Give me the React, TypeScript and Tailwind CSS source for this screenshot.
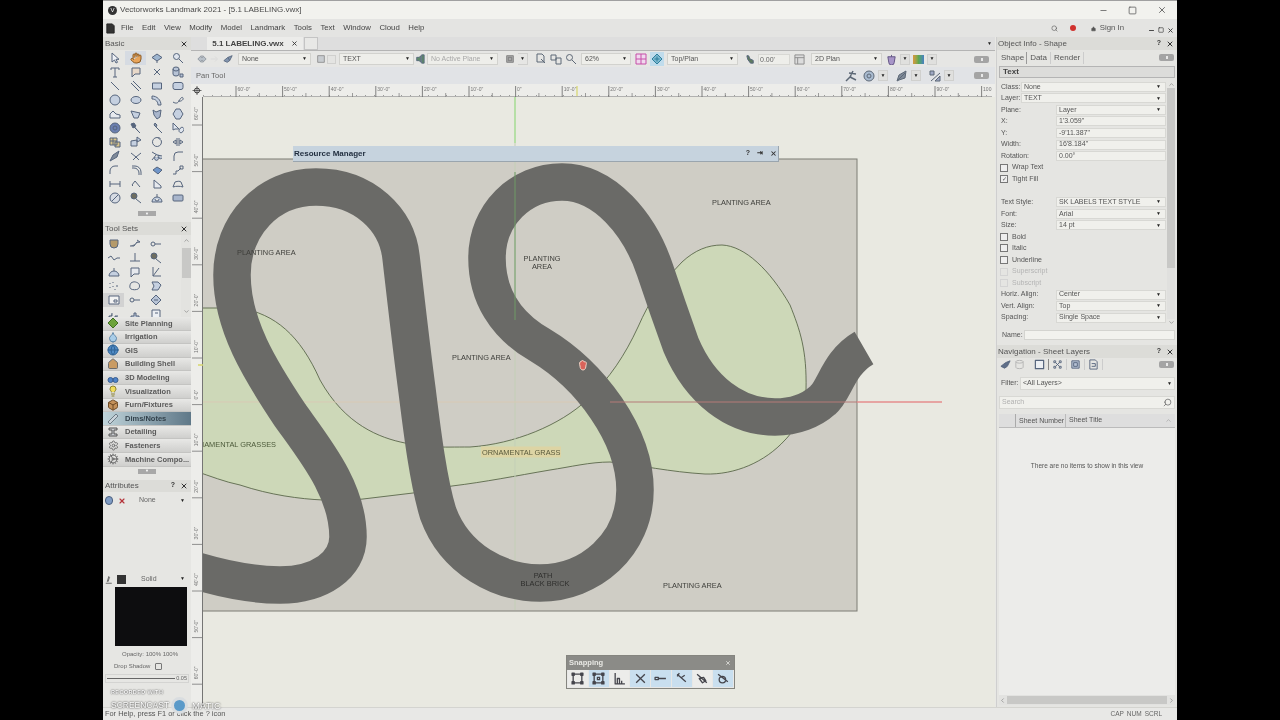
import React from 'react';
import { Hand, Minus, Square, X, Search, ChevronUp, ChevronDown, Lightbulb, Droplet, Globe, Settings, Cog, Box, Home } from 'lucide-react';

const menus = ['File', 'Edit', 'View', 'Modify', 'Model', 'Landmark', 'Tools', 'Text', 'Window', 'Cloud', 'Help'];

// small tool glyphs on a 12x12 grid: [path, fill]
const P = ({ d, fill = 'none', stroke = '#56657d', size = 12, sw = 1 }: { d: string; fill?: string; stroke?: string; size?: number; sw?: number }) => (
  <svg viewBox="0 0 12 12" width={size} height={size} className="shrink-0">
    <path d={d} fill={fill} stroke={stroke} strokeWidth={sw} strokeLinejoin="round" />
  </svg>
);

const basicTools: [string, string?][] = [
  ['M3 1v9l2.5-2 1.5 3 1.5-.7-1.5-3h3z', '#eef1f6'],
  ['HAND'],
  ['M6 2l5 3.5L6 9 1 5.5zM6 9v2', '#9fb6d0'],
  ['M1.5 4.5a3 3 0 1 0 6 0a3 3 0 1 0-6 0M7 7l4 4', '#dfe5ee'],
  ['M2 4V2h8v2M6 2v9M4 11h4'],
  ['M2 2h8v6H5l-3 3z', '#e8d8c8'],
  ['M3 3l6 6M9 3l-6 6'],
  ['M1 3a3 2 0 1 0 6 0a3 2 0 1 0-6 0v5a3 2 0 0 0 6 0V3M8 8h3v3H8z', '#b8c4d6'],
  ['M2 2l8 8'],
  ['M1 3l8 8M3 1l8 8'],
  ['M1.5 3h9v6h-9z', '#c5d0e0'],
  ['M3 2.5h6a2 2 0 0 1 2 2v3a2 2 0 0 1-2 2H3a2 2 0 0 1-2-2v-3a2 2 0 0 1 2-2z', '#c5d0e0'],
  ['M1 6a5 5 0 1 0 10 0a5 5 0 1 0-10 0z', '#c5d0e0'],
  ['M1 6a5 3.5 0 1 0 10 0a5 3.5 0 1 0-10 0z', '#c5d0e0'],
  ['M1 2c5 0 9 4 9 9h-3c0-3-2-6-6-6z', '#c5d0e0'],
  ['M1 8c3 2 5 1 6-1s3-5 4-3-3 4-5 3'],
  ['M1 10V6l3-3 3 3 4 1v3z', '#e6e9ee'],
  ['M1 3l9 2-2 5H4z', '#c5d0e0'],
  ['M2 2l3 2 5-2-1 7-3 2-3-4z', '#a9b6cc'],
  ['M4 1h4l3 5-3 5H4L1 6z', '#c5d0e0'],
  ['M1 6a5 5 0 1 0 10 0a5 5 0 1 0-10 0zM4 6a2 2 0 1 0 4 0a2 2 0 1 0-4 0z', '#6b7fb0'],
  ['M2 1l3 3-1 1 6 6M1 2l3-1 2 3-3 2z', '#56657d'],
  ['M4 1l2 2-1 2-2-2zM5 5l6 6', '#8b97aa'],
  ['M1 1v7l2-1 4 0zM8 7a2 2 0 1 0 3 2a2 2 0 1 0-3-2z', '#dfe5ee'],
  ['M1 2h7v7H1zM4 2v7M1 5h7M6 6h5v5H6z', '#d8c48a'],
  ['M1 5l6-1v6H1zM7 1l4 3-4 2z', '#c5d0e0'],
  ['M8 2a4.5 4.5 0 1 0 2 2M8 1v2h2'],
  ['M5 2v8M7 2v8M4 4L1 6l3 2zM8 4l3 2-3 2z'],
  ['M1 11l3-6 6-4-2 6z', '#7f8a99'],
  ['M1 3l5 4 5-4M3 10l3-3 3 3'],
  ['M1 2l5 3 5 1M1 10l4-5M8 5a1.5 1.5 0 1 0 3 3M4 7a2 2 0 1 0 3 0', '#b8c4d6'],
  ['M2 11V6a4 4 0 0 1 4-4h5'],
  ['M1 10V7a5 5 0 0 1 5-5h3'],
  ['M2 2h3a6 6 0 0 1 6 6v3M2 4h2a5 5 0 0 1 5 5v2'],
  ['M2 6l4-3 5 3-4 4z', '#6f95c9'],
  ['M1 10h3v-3h2l3-3M8 2h3v3H8z'],
  ['M1 3v6M11 3v6M1 6h10'],
  ['M2 7l3-4 5 6M2 7l1 1'],
  ['M3 2v8h7V8z', '#e6e9ee'],
  ['M1 9l2-5c3-1 5-1 6 0l2 5c-3-1-7-1-10 0z'],
  ['M1 6a5 5 0 1 0 10 0a5 5 0 1 0-10 0zM3 9l6-6', '#d6dbe3'],
  ['M1 4a3 3 0 1 0 6 0a3 3 0 1 0-6 0zM6 7l5 4', '#6d6d60'],
  ['M1 10a5 5 0 0 1 10 0zM6 5V2M4 7a2 2 0 1 0 4 0', '#c5d0e0'],
  ['M2 3h8a1 1 0 0 1 1 1v4a1 1 0 0 1-1 1H2a1 1 0 0 1-1-1V4a1 1 0 0 1 1-1z', '#a9b6cc'],
];

const setTools: [string, string?][] = [
  ['M2 2h8v4a4 4 0 0 1-8 0z', '#b59a6a'],
  ['M1 8h4l3-4h3M8 2l3 2', '#7f8a99'],
  ['M1 6a2 2 0 1 0 4 0a2 2 0 1 0-4 0M5 6h6'],
  ['M0 6l3-2 3 4 3-2h3'],
  ['M6 1v8M1 9h10', '#7f8a99'],
  ['M1 4a3 3 0 1 0 6 0a3 3 0 1 0-6 0zM6 7l5 4', '#6d6d60'],
  ['M1 10a5 5 0 0 1 10 0zM6 5V2', '#c5d0e0'],
  ['M2 2h8v6H5l-3 3z', '#e6e9ee'],
  ['M3 1v9h8M3 10l6-8', 'none'],
  ['M2 3v1M5 2v1M2 7v1M5 6v1M9 5v2M7 9v1'],
  ['M2 3c3-2 5-1 7 0s2 5 0 6-5 1-7 0-1-5 0-6z'],
  ['M2 2h6l3 3-3 5H2l2-4z', '#c5d0e0'],
  ['M1 2h10v8H1zM6 6h3v2H6z', '#f3f3f3'],
  ['M1 6a2 2 0 1 0 4 0a2 2 0 1 0-4 0M5 6h6'],
  ['M1 6l5-5 5 5-5 5zM4 6h4', '#b8c4d6'],
  ['M1 11V8h3V5M7 11V8h3', '#7f8a99'],
  ['M2 11V8h3V5h2v3h3v3', '#b8c4d6'],
  ['M2 2h8v9H2zM5 5h3', '#eceff3'],
];

const panels: { label: string; icon: React.ReactNode; active?: boolean }[] = [
  { label: 'Site Planning', icon: <P d="M6 1l5 5-5 5-5-5z" fill="#6da33c" stroke="#3f7020" /> },
  { label: 'Irrigation', icon: <Droplet size={12} fill="#a9cde8" stroke="#5c85a8" /> },
  { label: 'GIS', icon: <Globe size={12} fill="#4f8ac4" stroke="#2e6294" /> },
  { label: 'Building Shell', icon: <Home size={12} fill="#c99b63" stroke="#6b6b6b" /> },
  { label: '3D Modeling', icon: <P d="M1 8a2.5 2.5 0 1 0 5 0a2.5 2.5 0 1 0-5 0zM6 8a2.5 2.5 0 1 0 5 0a2.5 2.5 0 1 0-5 0z" fill="#4d82c8" stroke="#3a5f90" /> },
  { label: 'Visualization', icon: <Lightbulb size={12} fill="#f0dc5a" stroke="#8c8330" /> },
  { label: 'Furn/Fixtures', icon: <Box size={12} fill="#c4915a" stroke="#6e4a24" /> },
  { label: 'Dims/Notes', icon: <P d="M1 10l8-8 2 2-8 8z" fill="#c9d3da" stroke="#6d7b85" />, active: true },
  { label: 'Detailing', icon: <P d="M2 2h8v2H7v4h3v2H2V8h3V4H2z" fill="#c9ccd0" stroke="#555" /> },
  { label: 'Fasteners', icon: <Settings size={11} stroke="#6b6b6b" /> },
  { label: 'Machine Compo...', icon: <Cog size={12} stroke="#6b6b6b" /> },
];

const snaps: [string, boolean][] = [
  ['M2 2h8v8H2zM1 1h2v2H1zM9 1h2v2H9zM1 9h2v2H1zM9 9h2v2H9z', false],
  ['M2 2h8v8H2zM1 1h2v2H1zM9 1h2v2H9zM1 9h2v2H1zM9 9h2v2H9zM5 5h2v2H5z', true],
  ['M2 1v10h9M4 11V6h2v5M8 11V8', false],
  ['M2 2l8 8M10 2l-8 8', true],
  ['M1 5h3v2H1zM4 6h7', true],
  ['M2 2l8 7M4 1L2 4M6 5l3-2', true],
  ['M1 2l9 8M3 6l4-1 2 3-3 2z', false],
  ['M1 2l9 7M2 7a3 3 0 1 0 6 0a3 3 0 1 0-6 0', true],
];

const Sel = ({ w, label, muted = false }: { w: string; label: string; muted?: boolean }) => (
  <div className={`${w} h-[12px] shrink-0 flex items-center justify-between bg-[#eeeeea] border border-[#d2d2ce] pl-[3px] pr-[3px] text-[7px] ${muted ? 'text-[#a8a8a8]' : 'text-[#555]'}`}>
    <span className="truncate">{label}</span>
    <span className="text-[5px] text-[#222]">▼</span>
  </div>
);

const Chip = () => (
  <div className="w-[15px] h-[7px] rounded-[2px] bg-[#a4a4a4] flex items-center justify-center shrink-0">
    <div className="w-[2px] h-[3px] bg-[#e8e8e8]" />
  </div>
);

const Caret = () => <div className="w-[10px] h-[11px] bg-[#e0e0de] border border-[#d0d0ce] flex items-center justify-center text-[5px] text-[#222] shrink-0">▼</div>;

const PanelHead = ({ title, help = true, className = '' }: { title: string; help?: boolean; className?: string }) => (
  <div className={`flex items-center justify-between pl-[2px] pr-[3px] bg-[#dcdcd8] text-[8px] text-[#555] ${className}`}>
    <span>{title}</span>
    <div className="flex items-center gap-[5px] text-[#333] font-bold">
      {help && <span className="text-[7px]">?</span>}
      <X size={8} strokeWidth={3} />
    </div>
  </div>
);

type Row = { label: string; value?: string; kind?: 'wide' | 'sel' | 'text' | 'check' | 'checked' | 'off' | 'gap' };
const infoRows: Row[] = [
  { label: 'Class:', value: 'None', kind: 'wide' },
  { label: 'Layer:', value: 'TEXT', kind: 'wide' },
  { label: 'Plane:', value: 'Layer', kind: 'sel' },
  { label: 'X:', value: '1\'3.059"', kind: 'text' },
  { label: 'Y:', value: '-9\'11.387"', kind: 'text' },
  { label: 'Width:', value: '16\'8.184"', kind: 'text' },
  { label: 'Rotation:', value: '0.00°', kind: 'text' },
  { label: 'Wrap Text', kind: 'check' },
  { label: 'Tight Fill', kind: 'checked' },
  { label: '', kind: 'gap' },
  { label: 'Text Style:', value: 'SK LABELS TEXT STYLE', kind: 'sel' },
  { label: 'Font:', value: 'Arial', kind: 'sel' },
  { label: 'Size:', value: '14 pt', kind: 'sel' },
  { label: 'Bold', kind: 'check' },
  { label: 'Italic', kind: 'check' },
  { label: 'Underline', kind: 'check' },
  { label: 'Superscript', kind: 'off' },
  { label: 'Subscript', kind: 'off' },
  { label: 'Horiz. Align:', value: 'Center', kind: 'sel' },
  { label: 'Vert. Align:', value: 'Top', kind: 'sel' },
  { label: 'Spacing:', value: 'Single Space', kind: 'sel' },
];

function InfoRow({ r }: { r: Row }) {
  if (r.kind === 'gap') return <div className="h-[11.55px] shrink-0" />;
  if (r.kind === 'check' || r.kind === 'checked' || r.kind === 'off') {
    return (
      <div className={`h-[11.55px] shrink-0 flex items-center gap-[4px] pl-[1px] text-[7px] ${r.kind === 'off' ? 'text-[#b4b4b4]' : 'text-[#555]'}`}>
        <div className={`w-[8px] h-[8px] border flex items-center justify-center text-[6px] leading-none ${r.kind === 'off' ? 'border-[#d4d4d4]' : 'border-[#777] bg-[#eee]'}`}>
          {r.kind === 'checked' ? '✓' : ''}
        </div>
        <span>{r.label}</span>
      </div>
    );
  }
  return (
    <div className="h-[11.55px] shrink-0 flex items-center text-[7px] text-[#555]">
      <span className={`pl-[2px] shrink-0 ${r.kind === 'wide' ? 'w-[22px]' : 'w-[57px]'}`}>{r.label}</span>
      <div className="flex-1 h-[10px] bg-[#f0f0ec] border border-[#d8d8d4] flex items-center justify-between px-[2px]">
        <span>{r.value}</span>
        {r.kind !== 'text' && <span className="text-[5px] text-[#222] pr-[2px]">▼</span>}
      </div>
    </div>
  );
}

function Drawing() {
  const road =
    'M190 569 C225 580 255 585 280 585 C320 585 348 565 348 537 C348 490 315 450 290 415 C260 370 232 325 232 275 C232 225 268 187 316 187 C365 187 397 220 401 257 C406 300 411 345 417 390 C422 430 428 480 438 513 C455 560 500 583 540 583 C590 583 635 545 635 490 C635 435 590 375 540 345 C505 325 487 295 487 258 C487 215 520 182 562 182 C605 182 640 225 655 270 C665 300 672 320 681 345 C700 390 735 417 775 417 C795 417 812 410 823 400 C835 390 838 363 864 348';
  const green =
    'M195 308 L240 308 C275 314 300 335 320 380 C345 425 380 438 405 443 C425 448 440 447 470 447 C515 444 560 425 587 400 C610 378 625 355 638 327 C650 300 660 285 682 262 C695 250 708 245 722 245 C745 246 770 270 790 305 C800 330 807 350 806 390 C802 415 795 430 785 440 C765 462 735 475 705 474 C670 472 640 465 610 462 C590 462 570 467 550 470 C515 476 485 482 452 486 C430 490 420 492 413 493 L363 499 C345 501 335 501 323 500 C300 499 270 495 240 485 C225 482 210 476 195 471 Z';
  return (
    <svg viewBox="203 97 792 610" className="w-full h-full block">
      <rect x="203" y="97" width="792" height="610" fill="#e9e9e1" />
      <rect x="195" y="159" width="662" height="452" fill="#cfcdc5" stroke="#7c7c74" />
      <path d={green} fill="#cdd8b8" stroke="#4d5a3c" strokeWidth="0.8" />
      <line x1="515" y1="97" x2="515" y2="143" stroke="#b6dfa6" strokeWidth="2" />
      <line x1="515" y1="143" x2="515" y2="610" stroke="#c3cfb6" strokeWidth="1" />
      <line x1="203" y1="402" x2="600" y2="402" stroke="#d8c9b4" strokeWidth="1" />
      <path d={road} fill="none" stroke="#6a6a67" strokeWidth="37.5" strokeLinecap="butt" />
      <line x1="515" y1="172" x2="515" y2="320" stroke="#6f9a66" strokeWidth="1" />
      <line x1="610" y1="402" x2="857" y2="402" stroke="#b57a78" strokeWidth="1" />
      <line x1="857" y1="402" x2="942" y2="402" stroke="#e48c8c" strokeWidth="1.5" />
      <g fontFamily="'Liberation Sans', sans-serif" fontSize="7.4" fill="#3e3e3a">
        <text x="237" y="255">PLANTING AREA</text>
        <text x="542" y="260.5" textAnchor="middle">PLANTING</text>
        <text x="542" y="268.5" textAnchor="middle">AREA</text>
        <text x="712" y="205">PLANTING AREA</text>
        <text x="452" y="359.5">PLANTING AREA</text>
        <text x="663" y="587.5">PLANTING AREA</text>
        <text x="276" y="447" textAnchor="end" fill="#4c5a3a">ORNAMENTAL GRASSES</text>
        <rect x="481" y="446.5" width="80" height="11" fill="#ddd4a4" />
        <text x="482" y="455" fill="#5a5a3c">ORNAMENTAL GRASS</text>
        <text x="543" y="578" textAnchor="middle" fill="#2e2e2c">PATH</text>
        <text x="545" y="586" textAnchor="middle" fill="#2e2e2c">BLACK BRICK</text>
      </g>
      <path d="M580 366c-1-3 0-5 1-4 0-2 3-2 3 0 2-1 3 1 2 3 0 3-1 5-3 5s-3-2-3-4z" fill="#d9635a" stroke="#f2d6c8" strokeWidth="1" />
    </svg>
  );
}

function HRuler() {
  const xs = Array.from({ length: 17 }, (_, i) => 236 + i * 46.6);
  const labels = ['60\'-0"', '50\'-0"', '40\'-0"', '30\'-0"', '20\'-0"', '10\'-0"', '0"', '10\'-0"', '20\'-0"', '30\'-0"', '40\'-0"', '50\'-0"', '60\'-0"', '70\'-0"', '80\'-0"', '90\'-0"', '100'];
  return (
    <svg viewBox="191 84 804 13" className="w-full h-[13px] block shrink-0">
      <rect x="191" y="84" width="804" height="13" fill="#ededea" />
      <line x1="203" y1="95.5" x2="992" y2="95.5" stroke="#777" strokeWidth="0.7" strokeDasharray="1 8" />
      <line x1="203" y1="96.5" x2="992" y2="96.5" stroke="#888" strokeWidth="0.6" />
      <circle cx="197" cy="90.5" r="2.5" fill="#eee" stroke="#333" strokeWidth="1" />
      <path d="M197 86v9M192.500 90.500h9" stroke="#333" strokeWidth="0.7" />
      {xs.map((x, i) => (
        <g key={i}>
          <line x1={x} y1="86" x2={x} y2="97" stroke="#666" strokeWidth="0.8" />
          <line x1={x + 23.3} y1="93" x2={x + 23.3} y2="97" stroke="#777" strokeWidth="0.7" />
          <text x={x + 1.5} y="91" fontSize="5" fill="#777" fontFamily="'Liberation Sans', sans-serif">{labels[i]}</text>
        </g>
      ))}
      <line x1="577" y1="86" x2="577" y2="96" stroke="#d6d66a" strokeWidth="1.2" />
    </svg>
  );
}

function VRuler() {
  const ys = Array.from({ length: 13 }, (_, i) => 125 + i * 46.6);
  return (
    <svg viewBox="191 97 12 610" className="w-[12px] h-full block shrink-0">
      <rect x="191" y="97" width="12" height="610" fill="#ededea" />
      <line x1="202.500" y1="97" x2="202.500" y2="707" stroke="#555" strokeWidth="0.8" />
      {ys.map((y, i) => (
        <g key={i}>
          <line x1="192" y1={y} x2="203" y2={y} stroke="#777" strokeWidth="0.8" />
          <text x="198" y={y - 5} fontSize="5" fill="#777" fontFamily="'Liberation Sans', sans-serif" transform={`rotate(-90 198 ${y - 5})`}>{`${Math.abs(60 - i * 10)}'-0"`}</text>
        </g>
      ))}
      <line x1="198" y1="365" x2="203" y2="365" stroke="#d6d66a" strokeWidth="1.5" />
    </svg>
  );
}

export default function App() {
  return (
    <div className="w-[1280px] h-[720px] bg-black overflow-hidden flex justify-center font-['Liberation_Sans',sans-serif] blur-[0.3px]">
      <div className="relative w-[1074px] h-[720px] bg-[#e8e8e4] flex flex-col">
        {/* Title bar */}
        <div className="h-[19px] shrink-0 bg-[#f2f2ee] border-t border-[#a0a0a0] flex items-center pl-[5px] text-[8px] text-[#4a4a4a]">
          <div className="w-[9px] h-[9px] rounded-full bg-[#333] mr-[3px] flex items-center justify-center text-[6px] text-white">V</div>
          <span>Vectorworks Landmark 2021 - [5.1 LABELING.vwx]</span>
          <div className="ml-auto flex items-center gap-[20px] pr-[10px] text-[#555]">
            <Minus size={9} />
            <Square size={9} />
            <X size={10} />
          </div>
        </div>
        {/* Menu bar */}
        <div className="h-[18px] shrink-0 bg-[#e4e4e2] flex items-center pl-[2px] text-[7.8px] text-[#444]">
          <P d="M2 1h6l2 2v8H2z" fill="#333" stroke="#222" size={11} />
          <div className="flex gap-[8.5px] ml-[5px]">
            {menus.map(m => <span key={m}>{m}</span>)}
          </div>
          <div className="ml-auto flex items-center pr-[3px] text-[#555]">
            <Search size={7} className="mr-[12px]" />
            <div className="w-[6px] h-[6px] rounded-full bg-[#d0312d] mr-[14px]" />
            <P d="M3 10V6h6v4zM4 6l2-3 2 3" fill="#555" stroke="#555" size={7} />
            <span className="ml-[3px] mr-[24px]">Sign In</span>
            <div className="flex items-center gap-[3px] text-[#333] mt-[4px]">
              <Minus size={7} strokeWidth={3} />
              <Square size={6} strokeWidth={2.5} />
              <X size={7} strokeWidth={3} />
            </div>
          </div>
        </div>

        <div className="flex-1 min-h-0 flex">
          {/* Left palettes */}
          <div className="w-[88px] shrink-0 flex flex-col bg-[#e6e6e3]">
            <PanelHead title="Basic" help={false} className="h-[13px]" />
            <div className="grid grid-cols-[21px_21px_21px_21px] auto-rows-[14px] pl-[1px] pt-[1px]">
              {basicTools.map(([d, fill], i) => (
                <div key={i} className={`flex items-center justify-center ${d === 'HAND' ? 'bg-[#d6dbe2]' : ''}`}>
                  {d === 'HAND' ? <Hand size={12} fill="#e8a45a" stroke="#8a5a24" /> : <P d={d} fill={fill} />}
                </div>
              ))}
            </div>
            <div className="flex justify-center mt-[6px]">
              <div className="w-[18px] h-[5px] bg-[#a8a8a8] flex items-center justify-center text-[4px] text-white">▼</div>
            </div>
            <div className="h-[6px]" />
            <PanelHead title="Tool Sets" help={false} className="h-[13px]" />
            <div className="h-[82px] flex overflow-hidden">
              <div className="grid grid-cols-[21px_21px_21px] auto-rows-[14px] pt-[2px] w-[78px]">
                {setTools.map(([d, fill], i) => (
                  <div key={i} className={`flex items-center justify-center ${i === 12 ? 'bg-[#d2d2d2]' : ''}`}>
                    <P d={d} fill={fill} />
                  </div>
                ))}
              </div>
              <div className="w-[10px] flex flex-col items-center text-[#777] py-[2px] bg-[#e3e3e0]">
                <ChevronUp size={7} />
                <div className="w-[9px] h-[30px] bg-[#c8c8c6] mt-[4px]" />
                <ChevronDown size={7} className="mt-auto" />
              </div>
            </div>
            <div className="flex flex-col">
              {panels.map(p => (
                <div
                  key={p.label}
                  className={`h-[13.6px] flex items-center pl-[3px] text-[7.5px] font-bold border-b border-[#c4c4c2] ${p.active ? 'bg-gradient-to-r from-[#c0d4da] to-[#5f7888] text-[#33424c]' : 'bg-gradient-to-b from-[#e8e8e6] to-[#cfcfcd] text-[#5a5a5a]'}`}
                >
                  <div className="w-[14px] flex justify-center shrink-0">{p.icon}</div>
                  <span className="ml-[5px] whitespace-nowrap">{p.label}</span>
                </div>
              ))}
            </div>
            <div className="flex justify-center mt-[2px]">
              <div className="w-[18px] h-[5px] bg-[#a8a8a8] flex items-center justify-center text-[4px] text-white">▼</div>
            </div>
            <div className="h-[6px]" />
            <PanelHead title="Attributes" className="h-[12px]" />
            <div className="h-[18px] flex items-center pl-[2px] pr-[6px] text-[7px] text-[#666]">
              <div className="w-[8px] h-[9px] rounded-full bg-[#7f9cc4] border border-[#4b5f7e]" />
              <X size={8} strokeWidth={3.5} className="text-[#b5343a] ml-[5px]" />
              <span className="ml-[13px]">None</span>
              <span className="ml-auto text-[5px] text-[#222]">▼</span>
            </div>
            <div className="h-[64px]" />
            <div className="h-[11px] flex items-center pl-[2px] pr-[6px] text-[7px] text-[#666]">
              <P d="M1 11h8M3 9l2-7 1 1-2 6" size={9} stroke="#444" />
              <div className="w-[9px] h-[9px] bg-[#333] ml-[3px]" />
              <span className="ml-[15px]">Solid</span>
              <span className="ml-auto text-[5px] text-[#222]">▼</span>
            </div>
            <div className="w-[72px] h-[59px] bg-[#0d0d0f] ml-[12px] mt-[2px] shrink-0" />
            <div className="text-center text-[6px] text-[#666] mt-[4px] pl-[6px]">Opacity: 100% 100%</div>
            <div className="flex items-center text-[6px] text-[#666] pl-[11px] mt-[3px]">
              <span>Drop Shadow</span>
              <div className="w-[7px] h-[7px] border border-[#777] rounded-[1px] ml-[5px]" />
            </div>
            <div className="flex items-center mx-[2px] mt-[3px] text-[5.5px] text-[#666] border border-[#d4d4d2] h-[9px] px-[1px]">
              <div className="flex-1 h-px bg-[#666]" />
              <span className="ml-[1px]">0.05</span>
            </div>
          </div>

          {/* Document area */}
          <div className="flex-1 min-w-0 flex flex-col pr-[1px]">
            <div className="h-[14px] shrink-0 bg-[#dedede] flex items-end pl-[16px] pr-[3px] border-b border-[#b4b4b4] text-[8px]">
              <div className="h-[13px] w-[96px] flex items-center justify-center gap-[7px] font-bold text-[#444] bg-[#ececea]">
                <span>5.1 LABELING.vwx</span>
                <X size={7} strokeWidth={3} className="text-[#333]" />
              </div>
              <div className="h-[13px] w-[14px] ml-[1px] border border-[#c4c4c4] bg-[#e8e8e6]" />
              <span className="ml-auto text-[5px] text-[#222] pb-[3px]">▼</span>
            </div>
            <div className="h-[16px] shrink-0 bg-[#e6e6e4] flex items-center pl-[6px] text-[#56657d]">
              <P d="M1 6l4-4v2h2V2l4 4-4 4V8H5v2z" fill="#b8c0c8" stroke="#8a929a" size={10} />
              <div className="w-[3px]" />
              <P d="M1 6h7M6 3l3 3-3 3" stroke="#d8d8d8" size={10} />
              <div className="w-[3px]" />
              <P d="M1 8l5-4 5-2-3 6-3 2zM6 4l2 4" fill="#8294ae" size={10} />
              <div className="w-[5px]" />
              <Sel w="w-[73px]" label="None" />
              <div className="w-[5px]" />
              <P d="M2 2h8v8H2z" fill="#c8ccd0" stroke="#8a8a8a" size={10} />
              <div className="w-[9px] h-[9px] bg-[#e4e4e2] border border-[#d0d0ce] mr-[3px] ml-[1px]" />
              <Sel w="w-[75px]" label="TEXT" />
              <div className="w-[1px]" />
              <P d="M2 4h3l2-2v8l-2-2H2zM8 1h3v10H8z" fill="#5e8a6a" size={10} />
              <div className="w-[2px]" />
              <Sel w="w-[71px]" label="No Active Plane" muted />
              <div className="w-[7px]" />
              <P d="M2 2h8v8H2zM4 4h4v4H4z" fill="#a8a8a8" stroke="#7a7a7a" size={10} />
              <div className="w-[10px] h-[12px] mr-[7px] ml-[3px] border-y border-r border-[#d0d0ce] flex items-center justify-center text-[5px] text-[#222]">▼</div>
              <P d="M2 1h5l2 2v6H2zM6 6l4 4" stroke="#5d6876" size={12} />
              <div className="w-[3px]" />
              <P d="M1 2h5v5H1zM6 5h5v6H6z" stroke="#5d6876" size={12} />
              <div className="w-[3px]" />
              <P d="M1.500 4.500a3 3 0 1 0 6 0a3 3 0 1 0-6 0M7 7l4 4" stroke="#5d6876" size={12} />
              <div className="w-[4px]" />
              <Sel w="w-[50px]" label="62%" />
              <div className="w-[4px]" />
              <P d="M1 1h10v10H1zM6 1v10M1 6h10" stroke="#c64fa8" fill="#f0d8ee" size={12} />
              <div className="w-[14px] h-[14px] ml-[3px] mr-[3px] bg-[#c0dcec] flex items-center justify-center">
                <P d="M6 1l5 5-5 5-5-5zM3.500 6h5M6 3.500v5" stroke="#2c7e9c" fill="#7bb8d0" size={12} />
              </div>
              <Sel w="w-[71px]" label="Top/Plan" />
              <div className="w-[7px]" />
              <P d="M2 2c2-1 3 1 3 3l4 2v3H6L3 6z" fill="#5e7a5e" size={11} />
              <div className="w-[2px]" />
              <div className="w-[32px] h-[11px] bg-[#eeeeea] border border-[#d8d8d4] text-[7px] text-[#666] pl-[1px] leading-[9px]">0.00'</div>
              <div className="w-[4px]" />
              <P d="M1 1h10v10H1zM1 4h10M4 4v7" stroke="#8a8a8a" fill="#dcdcdc" size={11} />
              <div className="w-[6px]" />
              <Sel w="w-[71px]" label="2D Plan" />
              <div className="w-[4px]" />
              <P d="M2 3h8l-1 6a3 3 0 0 1-6 0zM6 1v2" fill="#a896c8" stroke="#5d4f80" size={11} />
              <div className="ml-[3px]"><Caret /></div>
              <div className="w-[3px]" />
              <div className="w-[11px] h-[9px] bg-gradient-to-r from-[#d8963c] via-[#5ea84e] to-[#4a7ec0]" />
              <div className="ml-[3px]"><Caret /></div>
              <div className="ml-auto pr-[6px]"><Chip /></div>
            </div>
            <div className="h-[17px] shrink-0 bg-[#e1e3e6] flex items-center pl-[5px] pr-[6px] text-[7.5px] text-[#666]">
              <span>Pan Tool</span>
              <div className="ml-auto flex items-center">
                <P d="M1 11l5-5M4 3l7 1M8 1L5 7l6 3" stroke="#5d6876" sw={1.5} size={12} />
                <div className="w-[6px]" />
                <P d="M1 6a5 5 0 1 0 10 0a5 5 0 1 0-10 0zM4 6a2 2 0 1 0 4 0a2 2 0 1 0-4 0z" fill="#a9bbd0" stroke="#5d6876" size={12} />
                <div className="ml-[3px]"><Caret /></div>
                <div className="w-[8px]" />
                <P d="M1 11l2-6 7-4-1 7-6 2zM2 10l7-7" fill="#7f8a99" stroke="#5d6876" size={12} />
                <div className="ml-[3px]"><Caret /></div>
                <div className="w-[8px]" />
                <P d="M1 1h4v4H1zM11 3L2 11M11 6v5H6z" fill="#9fa8c4" stroke="#5d6876" size={12} />
                <div className="ml-[3px]"><Caret /></div>
                <div className="w-[20px]" />
                <Chip />
              </div>
            </div>
            <HRuler />
            <div className="flex-1 min-h-0 flex">
              <VRuler />
              <div className="relative flex-1 min-w-0">
                <Drawing />
                {/* Resource Manager floating title */}
                <div className="absolute left-[90px] top-[49px] w-[486px] h-[16px] bg-[#c6d3de] border-b border-r border-[#9aa5ae] flex items-center pl-[1px] pr-[1px] text-[8px] font-bold text-[#1f2c3d]">
                  <span>Resource Manager</span>
                  <div className="ml-auto flex items-center gap-[7px] text-[#333]">
                    <span className="text-[7px]">?</span>
                    <span className="text-[7px]">⇥</span>
                    <X size={7} strokeWidth={3.5} />
                  </div>
                </div>
                {/* Snapping palette */}
                <div className="absolute left-[363px] top-[558px] w-[169px] h-[34px] bg-[#8b8b87] flex flex-col border border-[#85857f]">
                  <div className="h-[14px] flex items-center justify-between pl-[2px] pr-[3px] text-[7.5px] font-bold text-[#e8e8e4]">
                    <span>Snapping</span>
                    <X size={6} strokeWidth={3} />
                  </div>
                  <div className="flex-1 flex bg-[#e8e8e6] gap-[1px] px-[1px] pb-[1px]">
                    {snaps.map(([d, on], i) => (
                      <div key={i} className={`w-[20px] flex items-center justify-center ${on ? 'bg-[#c9dfef]' : 'bg-[#ececea]'}`}>
                        <P d={d} stroke="#45454c" size={13} sw={1.2} />
                      </div>
                    ))}
                  </div>
                </div>
              </div>
            </div>
          </div>

          {/* Right palettes */}
          <div className="w-[181px] shrink-0 flex flex-col bg-[#e5e5e2] border-l border-[#cfcfcf]">
            <PanelHead title="Object Info - Shape" className="h-[13px] !pl-[1px]" />
            <div className="h-[15px] flex items-center gap-[3px] pl-[4px] pr-[3px] text-[8px] text-[#555]">
              <span className="pr-[2px] border-r border-[#999]">Shape</span>
              <span className="pr-[3px] border-r border-[#ccc]">Data</span>
              <span className="pr-[3px] border-r border-[#ccc]">Render</span>
              <div className="ml-auto"><Chip /></div>
            </div>
            <div className="h-[12px] mx-[2px] mt-[1px] bg-[#dcdcda] border border-[#b4b4b4] pl-[3px] flex items-center text-[8px] font-bold text-[#444]">Text</div>
            <div className="flex gap-[1px] mt-[3px] mx-[2px] h-[245px] overflow-hidden">
              <div className="flex-1 min-w-0 flex flex-col">
                {infoRows.map((r, i) => <InfoRow key={i} r={r} />)}
              </div>
              <div className="w-[8px] flex flex-col items-center justify-between text-[#777]">
                <ChevronUp size={7} />
                <div className="w-[8px] flex-1 bg-[#e0e0de]">
                  <div className="h-[180px] bg-[#c8c8c6]" />
                </div>
                <ChevronDown size={7} />
              </div>
            </div>
            <div className="h-[14px] mt-[2px] flex items-center mx-[2px] text-[7px] text-[#555] gap-[1px]">
              <span className="pl-[3px]">Name:</span>
              <div className="flex-1 h-[10px] bg-[#f2f2ee] border border-[#d4d4d0]" />
            </div>
            <div className="h-[3px]" />
            <PanelHead title="Navigation - Sheet Layers" className="h-[13px] !pl-[1px]" />
            <div className="h-[13px] flex items-center px-[3px] gap-[3px]">
              <P d="M1 8l5-4 5-2-3 6-3 2z" fill="#5e6e88" size={11} />
              <P d="M2 3a4 1.500 0 1 0 8 0a4 1.500 0 1 0-8 0v6a4 1.500 0 0 0 8 0V3" stroke="#b4b4b4" size={11} />
              <div className="w-[3px]" />
              <P d="M1.500 1.500h9v9h-9z" stroke="#56657d" fill="#eceff3" size={11} sw={1.3} />
              <div className="w-px h-[11px] bg-[#888]" />
              <P d="M2 2h2v2H2zM8 2h2v2H8zM2 8h2v2H2zM8 8h2v2H8zM4 4l4 4M8 4L4 8" size={11} />
              <div className="w-px h-[11px] bg-[#ccc]" />
              <P d="M2 2h8v8H2zM4 4h4v4H4z" fill="#b8c4d6" size={11} />
              <div className="w-px h-[11px] bg-[#ccc]" />
              <P d="M2 1h6l2 2v8H2zM4 5h4v3H4" size={11} />
              <div className="w-px h-[11px] bg-[#ccc]" />
              <div className="ml-auto"><Chip /></div>
            </div>
            <div className="h-[19px] mt-[3px] flex items-center mx-[2px] text-[7px] text-[#555]">
              <span className="pl-[2px] w-[21px]">Filter:</span>
              <div className="flex-1 h-[13px] bg-[#f0f0ec] border border-[#d8d8d4] flex items-center justify-between px-[2px]">
                <span>&lt;All Layers&gt;</span>
                <span className="text-[5px] text-[#222]">▼</span>
              </div>
            </div>
            <div className="h-[13px] mt-[3px] mx-[2px] bg-[#f0f0ec] border border-[#d8d8d4] flex items-center justify-between px-[2px] text-[7px] text-[#b0b0b0]">
              <span>Search</span>
              <Search size={9} className="text-[#666] -scale-x-100" />
            </div>
            <div className="h-[14px] mt-[5px] mx-[2px] bg-[#dedede] border-b border-[#bbb] flex items-center text-[7px] text-[#555]">
              <div className="w-[17px] h-full border-r border-[#aaa]" />
              <span className="w-[50px] pl-[3px] h-full leading-[14px] border-r border-[#bbb]">Sheet Number</span>
              <span className="pl-[3px]">Sheet Title</span>
              <ChevronUp size={7} className="ml-auto mr-[3px] text-[#999]" />
            </div>
            <div className="flex-1 mx-[2px] bg-[#ececea] flex justify-center pt-[33px] text-[6.5px] text-[#555]">
              <span>There are no items to show in this view</span>
            </div>
            <div className="h-[10px] mx-[2px] flex items-center justify-between text-[#777] bg-[#e2e2e0]">
              <ChevronDown size={7} className="rotate-90" />
              <div className="w-[160px] h-[8px] bg-[#c8c8c6]" />
              <ChevronDown size={7} className="-rotate-90" />
            </div>
            <div className="h-[2px]" />
          </div>
        </div>

        {/* Status bar */}
        <div className="h-[13px] shrink-0 bg-[#e8e8e6] border-t border-[#d4d4d0] flex items-center pl-[2px] pr-[15px] text-[7.4px] text-[#555]">
          <span>For Help, press F1 or click the ? icon</span>
          <div className="ml-auto flex gap-[3px] text-[6.5px] text-[#666]">
            <span>CAP</span>
            <span>NUM</span>
            <span>SCRL</span>
          </div>
        </div>

        {/* Recorder watermark */}
        <div className="absolute left-[8px] top-[688px] w-[120px] h-[28px] text-white pointer-events-none">
          <div className="text-[5.5px] font-bold tracking-[0.4px] [text-shadow:0_0_1.5px_#000]">RECORDED WITH</div>
          <div className="flex items-center text-[8.5px] [text-shadow:0_0_2px_#000] mt-[1px]">
            <span>SCREENCAST</span>
            <div className="w-[17px] h-[17px] rounded-full border-[3px] border-[#d9dde0] bg-[#5a9ac9] ml-[2px] mr-[4px] shrink-0" />
            <span className="text-[9.5px]">MATIC</span>
          </div>
        </div>
      </div>
    </div>
  );
}
